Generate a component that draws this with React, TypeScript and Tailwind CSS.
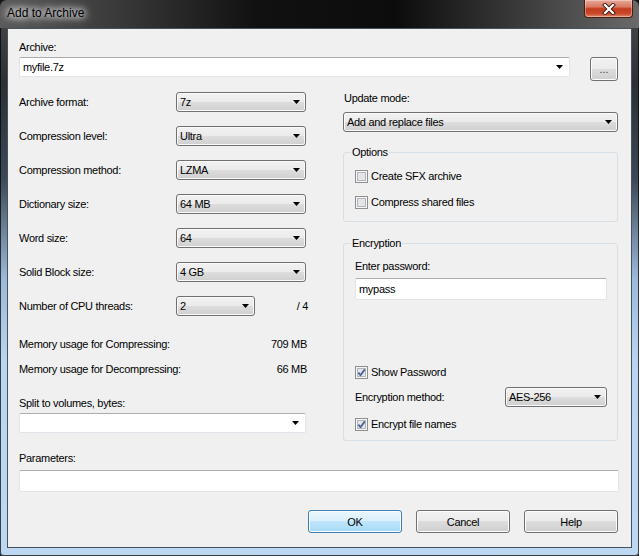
import type { ReactNode } from 'react';

// small black triangle used by every drop-down
const Arrow = () => (
  <svg width="7" height="4" viewBox="0 0 7 4" className="shrink-0">
    <path d="M0 0h7L3.5 4z" fill="#000" />
  </svg>
);

// Win7 drop-down list (non editable)
function Select({ value, className = '' }: { value: string; className?: string }) {
  return (
    <div
      className={`h-[20px] flex items-center justify-between rounded-[3px] border border-[#707070] bg-[linear-gradient(180deg,#f2f2f2_0%,#ebebeb_48%,#dddddd_52%,#cfcfcf_100%)] shadow-[inset_0_0_0_1px_#fbfbfb] pl-[3px] pr-[5px] ${className}`}
    >
      <span>{value}</span>
      <Arrow />
    </div>
  );
}

// editable combo box / text box
function Edit({ value = '', arrow, className = '' }: { value?: string; arrow?: boolean; className?: string }) {
  return (
    <div
      className={`flex items-center justify-between bg-white border border-[#e2e3ea] border-t-[#abadb3] rounded-[2px] pl-[3px] pr-[6px] ${className}`}
    >
      <span>{value}</span>
      {arrow && <Arrow />}
    </div>
  );
}

function Check({ checked, label }: { checked?: boolean; label: string }) {
  return (
    <div className="h-[14px] flex items-center gap-[3px]">
      <svg width="13" height="13" viewBox="0 0 13 13" className="shrink-0">
        <rect x="0.5" y="0.5" width="12" height="12" fill="#f6f6f6" stroke="#8f8f8f" />
        <rect x="2.5" y="2.5" width="8" height="8" fill="#e3e5e8" stroke="#b3b7bd" />
        {checked && (
          <path d="M3.4 6.6 5.5 9.2 9.8 3.4" fill="none" stroke="#4c6398" strokeWidth="1.8" strokeLinejoin="round" />
        )}
      </svg>
      <span>{label}</span>
    </div>
  );
}

function Btn({ children, primary, className = '' }: { children: ReactNode; primary?: boolean; className?: string }) {
  return (
    <button
      className={`flex items-center justify-center rounded-[3px] border shadow-[inset_0_0_0_1px_#fcfcfc] ${
        primary
          ? 'border-[#3c7fb1] bg-[linear-gradient(180deg,#eaf6fd_0%,#d9f0fc_50%,#bee6fd_50%,#a7d9f5_100%)]'
          : 'border-[#707070] bg-[linear-gradient(180deg,#f2f2f2_0%,#ebebeb_50%,#dddddd_50%,#cfcfcf_100%)]'
      } ${className}`}
    >
      {children}
    </button>
  );
}

const CloseButton = () => (
  <div className="mr-[6px] w-[49px] h-[18px] flex items-center justify-center rounded-b-[4px] border border-t-0 border-[#4a1e12] bg-[linear-gradient(180deg,#e8a898_0%,#d87a63_40%,#c23b1d_52%,#c9492a_80%,#e08a6e_100%)] shadow-[inset_0_0_0_1px_rgba(255,255,255,0.35)]">
    <svg width="14" height="12" viewBox="0 0 14 12">
      <path d="M3 2l8 8M11 2l-8 8" stroke="#3a1a12" strokeWidth="4" strokeLinecap="square" />
      <path d="M3 2l8 8M11 2l-8 8" stroke="#fff" strokeWidth="2.2" strokeLinecap="square" />
    </svg>
  </div>
);

const leftRows: [string, string][] = [
  ['Archive format:', '7z'],
  ['Compression level:', 'Ultra'],
  ['Compression method:', 'LZMA'],
  ['Dictionary size:', '64 MB'],
  ['Word size:', '64'],
  ['Solid Block size:', '4 GB'],
];

export default function App() {
  return (
    <div className="w-[639px] h-[556px] bg-[#15171a] font-['Liberation_Sans',Arial,sans-serif] text-[11px] leading-[14px] tracking-[-0.3px] text-black">
      <div className="w-full h-full flex flex-col rounded-t-[7px] rounded-b-[4px] overflow-hidden bg-[linear-gradient(180deg,#4a4a4a_0%,#2c3036_15%,#3b4856_32%,#9bb9d8_50%,#b9d5f1_65%,#bcd8f3_100%)] shadow-[inset_0_0_0_1px_rgba(0,0,0,0.7)]">
        {/* title bar */}
        <div className="h-[28px] shrink-0 flex items-start justify-between bg-[linear-gradient(90deg,#5b5b5b_0%,#3a3a3a_18%,#111111_40%,#0c0c0c_62%,#3c3c3c_82%,#6a6a6a_100%)]">
          <span className="ml-[7px] mt-[5px] text-[12px] leading-[16px] tracking-normal [text-shadow:0_0_6px_#fff,0_0_8px_#fff,0_0_12px_rgba(255,255,255,0.8)]">
            Add to Archive
          </span>
          <CloseButton />
        </div>

        {/* client area */}
        <div className="mx-[7px] h-[520px] border border-[#48525c] bg-[#f0f0f0] pl-[11px] pr-[12px] pt-[11px] flex flex-col">
          <div>Archive:</div>
          <div className="mt-[3px] flex items-start">
            <Edit value="myfile.7z" arrow className="w-[551px] h-[20px]" />
            <Btn className="ml-[20px] w-[28px] h-[24px] text-[#444] tracking-normal">...</Btn>
          </div>

          <div className="mt-[10px] flex gap-[36px]">
            {/* left column */}
            <div className="w-[288px] flex flex-col pt-[1px]">
              <div className="flex flex-col gap-[14px]">
                {leftRows.map(([label, value]) => (
                  <div key={label} className="h-[20px] flex items-center">
                    <span className="w-[157px]">{label}</span>
                    <Select value={value} className="w-[130px]" />
                  </div>
                ))}
                <div className="h-[20px] flex items-center">
                  <span className="w-[157px]">Number of CPU threads:</span>
                  <Select value="2" className="w-[79px]" />
                  <span className="ml-auto -mr-[1px]">/ 4</span>
                </div>
              </div>
              <div className="mt-[21px] flex justify-between">
                <span>Memory usage for Compressing:</span>
                <span>709 MB</span>
              </div>
              <div className="mt-[11px] flex justify-between">
                <span>Memory usage for Decompressing:</span>
                <span>66 MB</span>
              </div>
              <div className="mt-[20px]">Split to volumes, bytes:</div>
              <Edit arrow className="mt-[3px] w-[287px] h-[20px]" />
            </div>

            {/* right column */}
            <div className="w-[275px] flex flex-col">
              <div className="ml-[1px]">Update mode:</div>
              <Select value="Add and replace files" className="mt-[7px] w-full" />

              <fieldset className="mt-[13px] border border-[#d5dfe5] rounded-[3px] pb-[12px]">
                <legend className="ml-[7px] px-[1px]">Options</legend>
                <div className="pl-[11px] flex flex-col">
                  <div className="mt-[10px]">
                    <Check label="Create SFX archive" />
                  </div>
                  <div className="mt-[12px]">
                    <Check label="Compress shared files" />
                  </div>
                </div>
              </fieldset>

              <fieldset className="mt-[14px] border border-[#d5dfe5] rounded-[3px] pb-[9px]">
                <legend className="ml-[7px] px-[1px]">Encryption</legend>
                <div className="pl-[11px] pr-[10px] flex flex-col">
                  <div className="mt-[9px]">Enter password:</div>
                  <Edit value="mypass" className="mt-[5px] h-[22px]" />
                  <div className="mt-[65px]">
                    <Check checked label="Show Password" />
                  </div>
                  <div className="mt-[8px] h-[20px] flex items-center justify-between">
                    <span>Encryption method:</span>
                    <Select value="AES-256" className="w-[102px]" />
                  </div>
                  <div className="mt-[10px]">
                    <Check checked label="Encrypt file names" />
                  </div>
                </div>
              </fieldset>
            </div>
          </div>

          <div className="mt-[10px]">Parameters:</div>
          <Edit className="mt-[5px] h-[22px]" />

          <div className="mt-[18px] mr-[1px] flex justify-end gap-[14px]">
            <Btn primary className="w-[94px] h-[23px]">OK</Btn>
            <Btn className="w-[94px] h-[23px]">Cancel</Btn>
            <Btn className="w-[94px] h-[23px]">Help</Btn>
          </div>
        </div>
      </div>
    </div>
  );
}
